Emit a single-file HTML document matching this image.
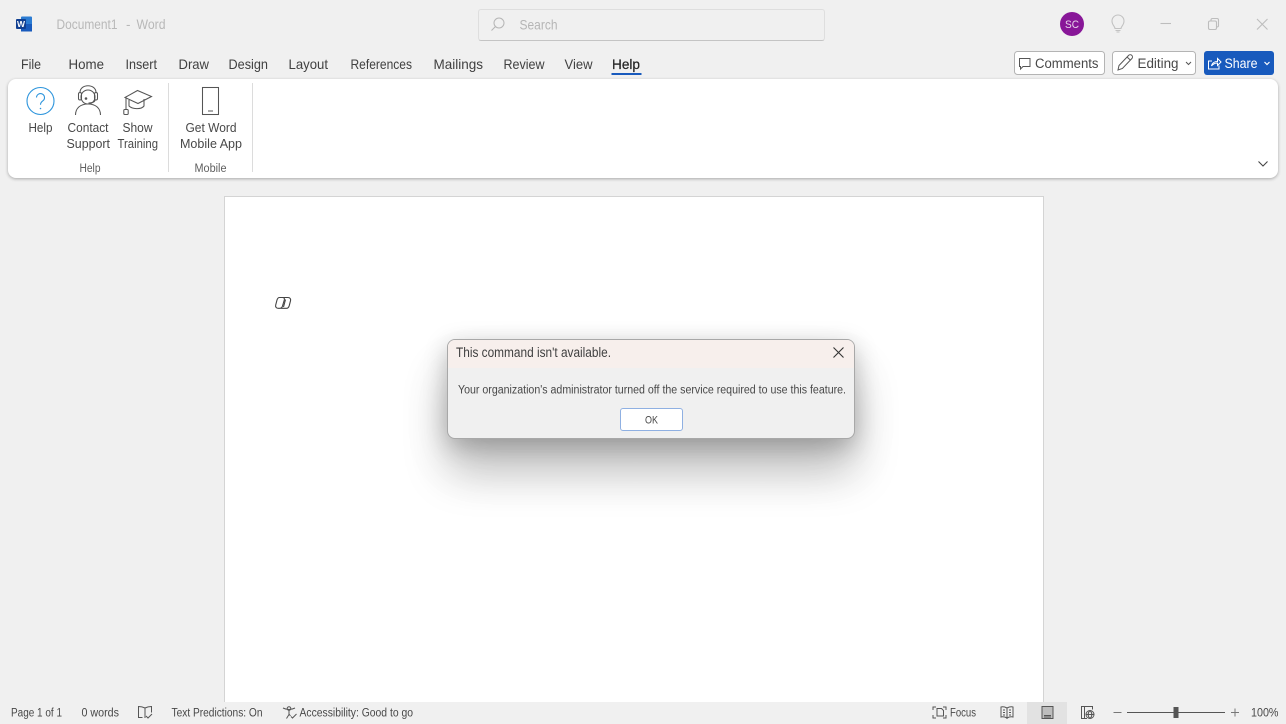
<!DOCTYPE html>
<html lang="en"><head><meta charset="utf-8"><title>Document1 - Word</title>
<style>
html,body{margin:0;padding:0;width:1286px;height:724px;overflow:hidden;background:#f0f0f0}
body{position:relative;font-family:"Liberation Sans",sans-serif}
svg{position:absolute;left:0;top:0;filter:blur(.3px)}
text{font-family:"Liberation Sans",sans-serif}
#ribbon{position:absolute;left:8px;top:79px;width:1270px;height:99px;background:#fff;border-radius:8px;box-shadow:0 1px 3px rgba(0,0,0,.3)}
#page{position:absolute;left:224px;top:196px;width:818px;height:520px;background:#fff;border:1px solid #d4d4d4}
#dlg{position:absolute;left:447px;top:339px;width:406px;height:98px;background:#f0f0f0;border:1px solid #a8a8a8;border-radius:8px;box-shadow:0 34px 44px rgba(0,0,0,.22),0 6px 24px rgba(0,0,0,.22),0 26px 56px rgba(0,0,0,.06)}
#dlgh{position:absolute;left:0;top:0;width:406px;height:28px;background:#f7efec;border-radius:7px 7px 0 0}
#ok{position:absolute;left:172px;top:68px;width:61px;height:21px;background:#fff;border:1px solid #8fb0e2;border-radius:3px}
#status{position:absolute;left:0;top:702px;width:1286px;height:22px;background:#f0f0f0}
#printview{position:absolute;left:1027px;top:702px;width:40px;height:22px;background:#e2e2e2}
#search{position:absolute;left:478px;top:9px;width:345px;height:30px;background:#f0f0f0;border:1px solid #dedede;border-bottom:1px solid #c4c4c4;border-radius:3px}
</style></head>
<body>
<div id="search"></div>
<div id="ribbon"></div>
<div id="page"></div>
<div id="status"></div>
<div id="printview"></div>
<div id="dlg"><div id="dlgh"></div><div id="ok"></div></div>
<svg width="1286" height="724" viewBox="0 0 1286 724" xmlns="http://www.w3.org/2000/svg">
<!-- Word logo -->
<rect x="21" y="16.500" width="11" height="15" rx="1" fill="#2b7cd3"/>
<rect x="21" y="24" width="11" height="7.500" fill="#185abd"/>
<rect x="16" y="19" width="10" height="10" rx="1" fill="#103f91"/>
<text x="17" y="27" font-size="8.500" font-weight="bold" fill="#fff" textLength="8" lengthAdjust="spacingAndGlyphs">W</text>
<g fill="#b8b8b8" font-size="13.500">
<text x="56.500" y="29" textLength="61" lengthAdjust="spacingAndGlyphs">Document1</text>
<text x="126" y="29">-</text>
<text x="136.500" y="29" textLength="29" lengthAdjust="spacingAndGlyphs">Word</text>
</g>
<!-- search -->
<circle cx="499" cy="23" r="5" fill="none" stroke="#b5b5b5" stroke-width="1"/>
<path d="M495.500 26.500L491.500 30.500" stroke="#b5b5b5" stroke-width="1.100" fill="none"/>
<text x="519.500" y="29.500" font-size="14" fill="#b5b5b5" textLength="38" lengthAdjust="spacingAndGlyphs">Search</text>
<!-- avatar -->
<circle cx="1072" cy="24" r="12" fill="#881798"/>
<text x="1065" y="28" font-size="11" fill="#e8d5eb" textLength="14" lengthAdjust="spacingAndGlyphs">SC</text>
<!-- bulb -->
<path d="M1115 28.500c0-2-3-3.500-3-7.500a6 6 0 0 1 12 0c0 4-3 5.500-3 7.500z" fill="none" stroke="#c2c2c2" stroke-width="1.100"/>
<path d="M1115.500 30.500h5M1116.500 32h3" stroke="#c2c2c2" stroke-width="1"/>
<!-- window controls -->
<path d="M1160.500 23.500h10.500" stroke="#bdbdbd" stroke-width="1.100"/>
<rect x="1208.500" y="21" width="8" height="8.500" rx="1.500" fill="none" stroke="#bdbdbd" stroke-width="1.100"/>
<path d="M1211 21v-1a1.500 1.500 0 0 1 1.500-1.500h4.500a1.500 1.500 0 0 1 1.500 1.500v5.500a1.500 1.500 0 0 1-1.500 1.500h-.5" fill="none" stroke="#bdbdbd" stroke-width="1.100"/>
<path d="M1257 19l10.500 10.500M1267.500 19L1257 29.500" stroke="#bdbdbd" stroke-width="1.100"/>
<!-- tabs -->
<g font-size="14" fill="#404040">
<text x="21" y="69" textLength="20" lengthAdjust="spacingAndGlyphs">File</text>
<text x="68.500" y="69" textLength="35.500" lengthAdjust="spacingAndGlyphs">Home</text>
<text x="125.500" y="69" textLength="31.500" lengthAdjust="spacingAndGlyphs">Insert</text>
<text x="178.500" y="69" textLength="30.500" lengthAdjust="spacingAndGlyphs">Draw</text>
<text x="228.500" y="69" textLength="39.500" lengthAdjust="spacingAndGlyphs">Design</text>
<text x="288.500" y="69" textLength="39.500" lengthAdjust="spacingAndGlyphs">Layout</text>
<text x="350.500" y="69" textLength="61.500" lengthAdjust="spacingAndGlyphs">References</text>
<text x="433.500" y="69" textLength="49.500" lengthAdjust="spacingAndGlyphs">Mailings</text>
<text x="503.500" y="69" textLength="41" lengthAdjust="spacingAndGlyphs">Review</text>
<text x="564.500" y="69" textLength="28" lengthAdjust="spacingAndGlyphs">View</text>
<text x="612" y="69" textLength="28" lengthAdjust="spacingAndGlyphs" fill="#262626" stroke="#262626" stroke-width=".25">Help</text>
</g>
<rect x="611.500" y="73" width="30" height="2" fill="#185abd"/>
<!-- top right buttons -->
<rect x="1014.500" y="51.500" width="90" height="23" rx="3" fill="#fff" stroke="#b4b4b4"/>
<path d="M1019.500 58.500h10.500v8h-7l-2.500 2.500v-2.500h-1z" fill="none" stroke="#555" stroke-width="1"/>
<text x="1035" y="68" font-size="13.500" fill="#484848" textLength="63.500" lengthAdjust="spacingAndGlyphs">Comments</text>
<rect x="1112.500" y="51.500" width="83" height="23" rx="3" fill="#fff" stroke="#b4b4b4"/>
<path d="M1118 70l1-4.500 9.500-10a1.800 1.800 0 0 1 3.400 3l-9.500 10zM1127 57l3.300 3" fill="none" stroke="#555" stroke-width="1"/>
<text x="1137.500" y="68" font-size="13.500" fill="#484848" textLength="41" lengthAdjust="spacingAndGlyphs">Editing</text>
<path d="M1186 62l2.500 2.500L1191 62" fill="none" stroke="#555" stroke-width="1"/>
<rect x="1204" y="51" width="70" height="24" rx="3" fill="#185abd"/>
<path d="M1212 61h-3.500v8h10.500v-3.500M1211.500 66c.5-3 3-4.500 6-4.500v-3l3.500 3.500-3.500 3.500v-2.500c-2.500 0-4.500 1-6 3z" fill="none" stroke="#fff" stroke-width="1"/>
<text x="1224.500" y="68" font-size="14" fill="#fff" textLength="33" lengthAdjust="spacingAndGlyphs">Share</text>
<path d="M1264.500 62l2.500 2.500 2.500-2.500" fill="none" stroke="#fff" stroke-width="1.200"/>
<!-- ribbon icons -->
<circle cx="40.500" cy="101" r="13.500" fill="none" stroke="#2e95dc" stroke-width="1.100"/>
<path d="M36.500 97.500a4 4 0 1 1 6.500 3.200c-1.600 1.200-2.500 2-2.500 4" fill="none" stroke="#2e95dc" stroke-width="1.100"/>
<circle cx="40.500" cy="108.500" r=".8" fill="#2e95dc"/>
<g fill="none" stroke="#555" stroke-width="1.050">
<circle cx="88" cy="97" r="7"/>
<rect x="78.500" y="92.500" width="3" height="7.500" rx="1.500"/>
<rect x="94.500" y="92.500" width="3" height="7.500" rx="1.500"/>
<path d="M80 92.500c0-9 16-9 16 0M95 100c0 2-3 3-6.500 3"/>
<path d="M75.500 115c0-7 5-11 12.500-11s12.500 4 12.500 11"/>
<path d="M125 97.500l12.500-7 14 6-13.500 7zM129 100v6c3 3 12 4 15 0v-7M126 98v11"/>
<rect x="123.800" y="109.500" width="4.400" height="5" rx="1"/>
<rect x="202.500" y="87.500" width="16" height="27"/>
</g>
<circle cx="86" cy="98.500" r="1.300" fill="#555"/>
<path d="M208 111h5" stroke="#555"/>
<!-- ribbon labels -->
<g font-size="12.500" fill="#484848" >
<text x="28.500" y="132" textLength="24" lengthAdjust="spacingAndGlyphs">Help</text>
<text x="67.500" y="132" textLength="41" lengthAdjust="spacingAndGlyphs">Contact</text>
<text x="66.500" y="148" textLength="43.500" lengthAdjust="spacingAndGlyphs">Support</text>
<text x="122.500" y="132" textLength="30" lengthAdjust="spacingAndGlyphs">Show</text>
<text x="117.500" y="148" textLength="40.500" lengthAdjust="spacingAndGlyphs">Training</text>
<text x="185.500" y="132" textLength="51" lengthAdjust="spacingAndGlyphs">Get Word</text>
<text x="180" y="148" textLength="62" lengthAdjust="spacingAndGlyphs">Mobile App</text>
</g>
<g font-size="11.500" fill="#606060">
<text x="79.500" y="172" textLength="21" lengthAdjust="spacingAndGlyphs">Help</text>
<text x="194.500" y="172" textLength="32" lengthAdjust="spacingAndGlyphs">Mobile</text>
</g>
<path d="M168.500 83v89M252.500 83v89" stroke="#dcdcdc" stroke-width="1"/>
<path d="M1258.500 161.500l4.500 4.500 4.500-4.500" fill="none" stroke="#444" stroke-width="1.100"/>
<!-- copilot cursor -->
<g fill="none" stroke="#444" stroke-width="1.100">
<path d="M279.500 297.500h3c1.500 0 2.300 1 1.800 2.500l-1.800 6c-.4 1.400-1.300 2.300-2.800 2.300h-1.500c-2 0-3-1.500-2.500-3.300l1.300-5c.5-1.600 1.300-2.500 2.500-2.500z"/>
<path d="M282 297.500h6c2 0 3 1.500 2.500 3.300l-1.300 5c-.5 1.600-1.300 2.500-2.700 2.500h-6"/>
<path d="M285.500 299.500l-2 7.500"/>
</g>
<!-- dialog -->
<text x="456" y="357" font-size="13.500" fill="#404040" textLength="155" lengthAdjust="spacingAndGlyphs">This command isn't available.</text>
<path d="M833.500 347.500l10 10M843.500 347.500l-10 10" stroke="#333" stroke-width="1.100"/>
<text x="458" y="393.500" font-size="11.500" fill="#484848" textLength="388" lengthAdjust="spacingAndGlyphs">Your organization's administrator turned off the service required to use this feature.</text>
<text x="645" y="423.500" font-size="11" fill="#484848" textLength="13" lengthAdjust="spacingAndGlyphs">OK</text>
<!-- status -->
<g font-size="11.500" fill="#484848">
<text x="11" y="716.500" textLength="51" lengthAdjust="spacingAndGlyphs">Page 1 of 1</text>
<text x="81.500" y="716.500" textLength="37.500" lengthAdjust="spacingAndGlyphs">0 words</text>
<text x="171.500" y="716.500" textLength="91" lengthAdjust="spacingAndGlyphs">Text Predictions: On</text>
<text x="299.500" y="716.500" textLength="113.500" lengthAdjust="spacingAndGlyphs">Accessibility: Good to go</text>
<text x="950" y="716.500" textLength="26" lengthAdjust="spacingAndGlyphs">Focus</text>
<text x="1251" y="716.500" textLength="27.500" lengthAdjust="spacingAndGlyphs">100%</text>
</g>
<g fill="none" stroke="#555" stroke-width="1">
<path d="M145 708c-2-1-4-1.500-6.500-1.500v11h4M145 708c2-1 4-1.500 6.500-1.500v6M145 708v10M146 716l2 2 4-4"/>
<circle cx="289" cy="708.500" r="1.800"/>
<path d="M283 708c2 1 3.500 1.500 6 1.500s4-.5 6-1.500M289 710.500v4l-2.500 4M289 714l1.500 2M291 716.500l1.500 1.500 4-4"/>
<path d="M933 710v-3h3M943 707h3v3M933 715v3h3M943 718h3v-3"/>
<path d="M937 708.500h4.500l2 2v5.500h-6.500z"/>
<path d="M1001 707c2-.5 4 0 6 1 2-1 4-1.500 6-1v10c-2-.5-4 0-6 1-2-1-4-1.500-6-1zM1007 708v11M1003 710h2M1003 712.500h2M1003 715h2M1009 710h2M1009 712.500h2M1009 715h2"/>
<rect x="1042" y="706.500" width="11" height="12" fill="#bdbdbd"/>
<path d="M1044 715.500h7M1044 717h7"/>
<path d="M1087 718.500h-5.500v-12h11v3"/>
<path d="M1084.500 706.500v12"/>
<circle cx="1090" cy="714.500" r="4"/>
<path d="M1086 714.500h8M1090 710.500c-2.500 2.500-2.500 5.500 0 8M1090 710.500c2.500 2.500 2.500 5.500 0 8"/>
</g>
<path d="M1113.500 712.500h8M1231 712.500h8M1235 708.500v8" stroke="#777" stroke-width="1"/>
<path d="M1127 712.500h98" stroke="#555" stroke-width="1"/>
<rect x="1173.500" y="707" width="5" height="11" fill="#555"/>
</svg>
</body></html>
